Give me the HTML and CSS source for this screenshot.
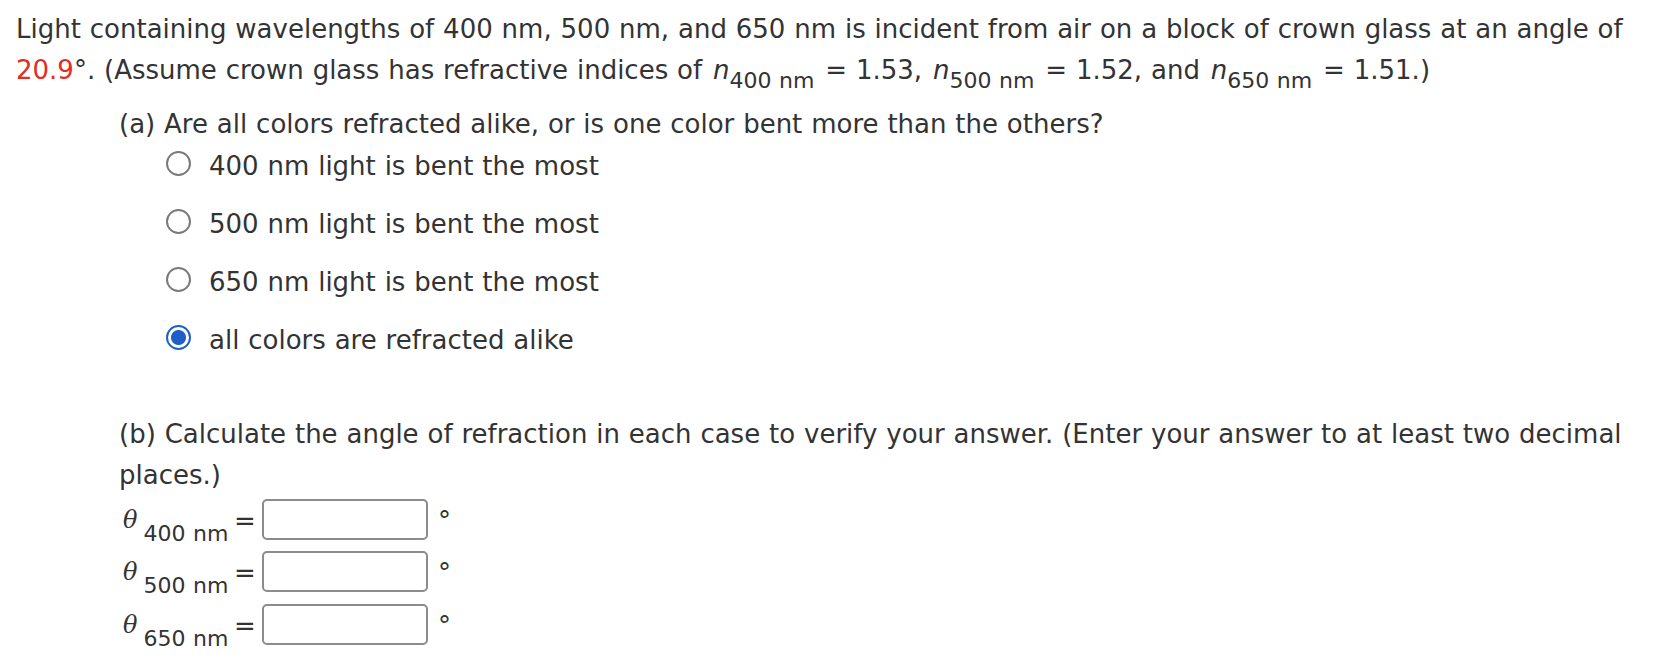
FILE: index.html
```html
<!DOCTYPE html>
<html lang="en">
<head>
<meta charset="utf-8">
<title>Crown glass dispersion</title>
<link rel="stylesheet" href="styles.css">
</head>
<body>
<div class="q">
  <p class="stem">Light containing wavelengths of 400 nm, 500 nm, and 650 nm is incident from air on a block of crown glass at an angle of<br><span class="red">20.9</span>°. (Assume crown glass has refractive indices of <i class="var">n</i><span class="sub">400 nm</span> = 1.53, <i class="var">n</i><span class="sub">500 nm</span> = 1.52, and <i class="var">n</i><span class="sub">650 nm</span> = 1.51.)</p>
  <div class="part">
    <p class="prompt pa">(a) Are all colors refracted alike, or is one color bent more than the others?</p>
    <ul class="opts">
      <li class="opt"><span class="radio"></span><span>400 nm light is bent the most</span></li>
      <li class="opt"><span class="radio"></span><span>500 nm light is bent the most</span></li>
      <li class="opt"><span class="radio"></span><span>650 nm light is bent the most</span></li>
      <li class="opt"><span class="radio on"></span><span>all colors are refracted alike</span></li>
    </ul>
    <p class="prompt pb">(b) Calculate the angle of refraction in each case to verify your answer. (Enter your answer to at least two decimal<br>places.)</p>
    <div class="rows">
      <div class="row"><span class="lbl"><i class="theta">θ</i><span class="tsub">400 nm</span></span><span class="eq">=</span><span class="box"></span><span class="deg">°</span></div>
      <div class="row"><span class="lbl"><i class="theta">θ</i><span class="tsub">500 nm</span></span><span class="eq">=</span><span class="box"></span><span class="deg">°</span></div>
      <div class="row"><span class="lbl"><i class="theta">θ</i><span class="tsub">650 nm</span></span><span class="eq">=</span><span class="box"></span><span class="deg">°</span></div>
    </div>
  </div>
</div>
</body>
</html>
```

FILE: styles.css
```css
html, body {
  margin: 0;
  padding: 0;
  background: #ffffff;
}
body {
  font-family: "DejaVu Sans", Verdana, sans-serif;
  font-size: 26px;
  color: #333333;
  word-spacing: 0.6px;
}
.q {
  padding: 9px 0 20px 16px;
}
.stem {
  margin: 0;
  line-height: 41px;
}
.red {
  color: #e32d22;
}
.var {
  font-style: italic;
  margin-left: 2px;
}
.sub {
  font-size: 22px;
  line-height: 0;
  vertical-align: -9px;
  margin-right: 2px;
}
.part {
  padding-left: 103px;
}
.prompt {
  margin: 0;
  line-height: 41px;
}
.pa {
  margin-top: 13px;
}
.opts {
  list-style: none;
  margin: 1.5px 0 0 0;
  padding: 0 0 0 47px;
  display: flex;
  flex-direction: column;
  gap: 19px;
}
.opt {
  display: flex;
  align-items: flex-start;
  gap: 18px;
  line-height: 39px;
}
.radio {
  flex: none;
  width: 25px;
  height: 25px;
  margin-top: 4.5px;
  box-sizing: border-box;
  border: 2px solid #7a7a7a;
  border-radius: 50%;
  background: #fff;
}
.radio.on {
  border: 2.5px solid #1f5ec8;
  background: radial-gradient(circle, #1f5ec8 0, #1f5ec8 7px, #ffffff 8px);
}
.pb {
  margin-top: 54px;
}
.rows {
  margin-top: 3px;
  display: flex;
  flex-direction: column;
  gap: 11.5px;
}
.row {
  display: flex;
  align-items: flex-start;
  height: 41px;
  line-height: 41px;
}
.lbl {
  flex: none;
  width: 115px;
  padding-left: 4px;
  box-sizing: border-box;
  white-space: nowrap;
}
.theta {
  font-family: "DejaVu Serif", "Liberation Serif", serif;
  font-size: 24px;
  font-style: italic;
  margin-right: 6px;
}
.tsub {
  font-size: 22px;
  line-height: 0;
  vertical-align: -13px;
}
.eq {
  flex: none;
  width: 28px;
  padding-top: 3px;
  line-height: 38px;
}
.box {
  flex: none;
  width: 166px;
  height: 41px;
  box-sizing: border-box;
  border: 2px solid #8c8c8c;
  border-radius: 5px;
  background: #fff;
}
.deg {
  margin-left: 10px;
  padding-top: 3px;
  line-height: 38px;
}
```
